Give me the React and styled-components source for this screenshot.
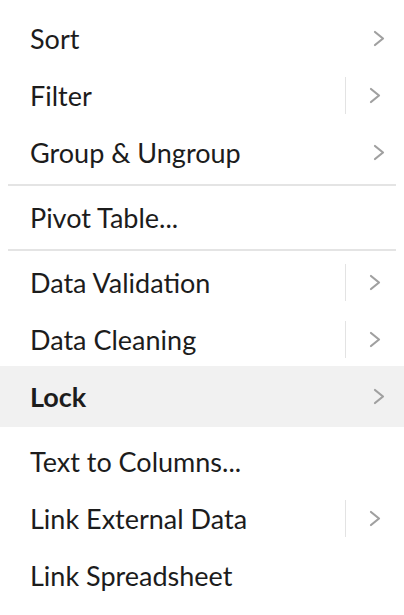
import React from 'react';
import styled, {createGlobalStyle} from 'styled-components';

const MENU = [
  {label: 'Sort', sub: true},
  {label: 'Filter', sub: true, split: true},
  {label: 'Group & Ungroup', sub: true},
  {divider: true},
  {label: 'Pivot Table...'},
  {divider: true},
  {label: 'Data Validation', sub: true, split: true},
  {label: 'Data Cleaning', sub: true, split: true},
  {label: 'Lock', sub: true, active: true},
  {divider: true, hidden: true},
  {label: 'Text to Columns...'},
  {label: 'Link External Data', sub: true, split: true},
  {label: 'Link Spreadsheet'},
];

const Chevron = () => (
    <svg width="14" height="17" viewBox="0 0 14 17" fill="none">
      <path d="M3 2 L11 8.5 L3 15" stroke="#a0a0a0" strokeWidth="2.2"
            strokeLinecap="round" strokeLinejoin="round"/>
    </svg>
);

const App = () => {
  return (
      <>
        <GlobalStyle/>
        <Menu>
          {MENU.map((item, i) => {
            if (item.divider) {
              return <Divider key={i} $hidden={item.hidden}/>;
            }
            return (
                <Row key={i} $active={item.active}>
                  <Label $active={item.active}>{item.label}</Label>
                  {item.sub && (
                      <Trail $split={item.split}>
                        <Chevron/>
                      </Trail>
                  )}
                </Row>
            );
          })}
        </Menu>
      </>
  );
};

export default App;

const GlobalStyle = createGlobalStyle`
  body {
    margin: 0;
    background: #fff;
    font-family: Lato, "Liberation Sans", sans-serif;
  }
`;

const Menu = styled.div`
  display: flex;
  flex-direction: column;
  width: 404px;
  height: 615px;
  padding-top: 10px;
  box-sizing: border-box;
  background: #fff;
`;

const Row = styled.div`
  display: flex;
  align-items: center;
  height: ${({$active}) => ($active ? '61px' : '57px')};
  margin: ${({$active}) => ($active ? '-2px 0' : '0')};
  padding-left: 30px;
  background: ${({$active}) => ($active ? '#f1f1f1' : 'transparent')};
  flex-shrink: 0;
`;

const Label = styled.span`
  flex: 1;
  font-size: 27px;
  font-weight: ${({$active}) => ($active ? 700 : 400)};
  color: #1c1c1c;
  line-height: 1;
`;

const Trail = styled.div`
  display: flex;
  align-items: center;
  justify-content: center;
  width: 59px;
  height: 37px;
  box-sizing: border-box;
  padding-left: ${({$split}) => ($split ? '0' : '8px')};
  border-left: 1.5px solid ${({$split}) => ($split ? '#e3e3e3' : 'transparent')};
`;

const Divider = styled.div`
  height: 2px;
  margin: 3px 8px;
  background: ${({$hidden}) => ($hidden ? 'transparent' : '#e4e4e4')};
  flex-shrink: 0;
`;
